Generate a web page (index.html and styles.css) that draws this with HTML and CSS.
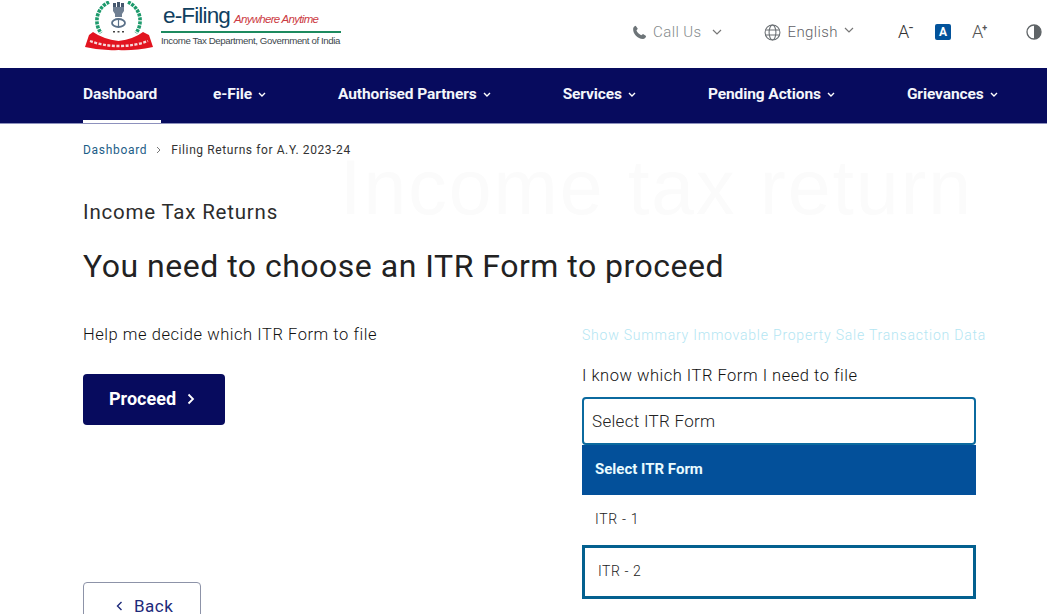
FILE: index.html
```html
<!DOCTYPE html>
<html lang="en">
<head>
<meta charset="utf-8">
<title>Income Tax Returns</title>
<link rel="stylesheet" href="styles.css">
</head>
<body>
<header class="topbar">
  <div class="brand">
    <svg class="emblem" width="72" height="52" viewBox="0 0 72 52" aria-hidden="true">
      <path d="M26 1A20.500 20.500 0 0 0 18 32M45 1A20.500 20.500 0 0 1 53 32" fill="none" stroke="#1d9a6c" stroke-width="3.600" stroke-dasharray="3 1"/>
      <path d="M30 6h11v4l-2 3v3h-7v-3l-2-3z" fill="#6f7f92"/>
      <path d="M30 2h3v4h-3zM34 1h3v5h-3zM38 2h3v4h-3z" fill="#46586e"/>
      <ellipse cx="35.500" cy="22" rx="6.500" ry="4" fill="none" stroke="#5a7088" stroke-width="1.800"/>
      <path d="M35.500 18v8" stroke="#5a7088" stroke-width="1.200"/>
      <path d="M30 30h2v1.500h-2zM34.500 30h2v1.500h-2zM39 30h2v1.500h-2z" fill="#444"/>
      <path d="M10 31Q20 38 35.500 40 51 38 60 31L66 34 70 46Q50 50 35.500 49 18 50 2 46L6 34Z" fill="#e2141f"/>
      <path d="M7 40Q20 45 35.500 45 52 45 65 40" fill="none" stroke="#f6d9da" stroke-width="2.400" stroke-dasharray="3 1.500"/>
    </svg>
    <div class="brand-text">
      <div class="brand-name"><span class="brand-title">e-Filing</span><span class="brand-tag">Anywhere Anytime</span></div>
      <div class="brand-dept">Income Tax Department, Government of India</div>
    </div>
  </div>
  <div class="tools">
    <div class="tool tool-call">
      <svg width="17" height="17" viewBox="0 0 24 24" aria-hidden="true"><path d="M6.600 2.500l3 4.200-1.900 2.600c1.300 2.900 3.700 5.300 6.700 6.600l2.600-1.800 4.300 2.900c-.3 2.300-2 4.200-4.400 4.200C9 21 3 14.500 3 7.200 3 4.800 4.400 3 6.600 2.500z" fill="#6d7478"/></svg>
      <span class="tool-label call-label">Call Us</span>
      <svg class="chev-light" width="10" height="6" viewBox="0 0 10 6" aria-hidden="true"><path d="M1 1l4 4 4-4" fill="none" stroke="#777" stroke-width="1.200"/></svg>
    </div>
    <div class="tool tool-lang">
      <svg width="17" height="17" viewBox="0 0 24 24" aria-hidden="true"><g fill="none" stroke="#6a6f73" stroke-width="1.500"><circle cx="12" cy="12" r="10.500"/><ellipse cx="12" cy="12" rx="4.800" ry="10.500"/><path d="M2 8.500h20M2 15.500h20"/></g></svg>
      <span class="tool-label">English</span>
      <svg class="chev-up" width="10" height="6" viewBox="0 0 10 6" aria-hidden="true"><path d="M1 1l4 4 4-4" fill="none" stroke="#777" stroke-width="1.200"/></svg>
    </div>
    <div class="font-tools">
      <span class="font-btn">A<sup class="font-mark">−</sup></span>
      <span class="font-btn font-active">A</span>
      <span class="font-btn font-light">A<sup class="font-mark">+</sup></span>
    </div>
    <svg class="contrast" width="16" height="16" viewBox="0 0 16 16" aria-hidden="true"><circle cx="8" cy="8" r="7" fill="#fff" stroke="#5f6467" stroke-width="1.300"/><path d="M8 1a7 7 0 0 1 0 14z" fill="#5f6467"/></svg>
  </div>
</header>

<nav class="nav">
  <a class="nav-item nav-active">Dashboard</a>
  <a class="nav-item">e-File<svg class="nav-chev" width="8" height="5" viewBox="0 0 8 5" aria-hidden="true"><path d="M1 1l3 3 3-3" fill="none" stroke="#fff" stroke-width="1.400"/></svg></a>
  <a class="nav-item">Authorised Partners<svg class="nav-chev" width="8" height="5" viewBox="0 0 8 5" aria-hidden="true"><path d="M1 1l3 3 3-3" fill="none" stroke="#fff" stroke-width="1.400"/></svg></a>
  <a class="nav-item">Services<svg class="nav-chev" width="8" height="5" viewBox="0 0 8 5" aria-hidden="true"><path d="M1 1l3 3 3-3" fill="none" stroke="#fff" stroke-width="1.400"/></svg></a>
  <a class="nav-item">Pending Actions<svg class="nav-chev" width="8" height="5" viewBox="0 0 8 5" aria-hidden="true"><path d="M1 1l3 3 3-3" fill="none" stroke="#fff" stroke-width="1.400"/></svg></a>
  <a class="nav-item">Grievances<svg class="nav-chev" width="8" height="5" viewBox="0 0 8 5" aria-hidden="true"><path d="M1 1l3 3 3-3" fill="none" stroke="#fff" stroke-width="1.400"/></svg></a>
</nav>

<main class="content">
  <div class="watermark">Income tax return</div>
  <div class="crumbs">
    <a class="crumb-link">Dashboard</a>
    <svg class="crumb-sep" width="6" height="8" viewBox="0 0 6 8" aria-hidden="true"><path d="M1 1l3 3-3 3" fill="none" stroke="#777" stroke-width="1"/></svg>
    <span class="crumb-current">Filing Returns for A.Y. 2023-24</span>
  </div>
  <p class="eyebrow">Income Tax Returns</p>
  <h1 class="headline">You need to choose an ITR Form to proceed</h1>
  <div class="columns">
    <section class="col-left">
      <p class="help">Help me decide which ITR Form to file</p>
      <button class="btn-proceed">Proceed<svg width="8" height="12" viewBox="0 0 8 12" aria-hidden="true"><path d="M1.500 1.500L6 6l-4.500 4.500" fill="none" stroke="#fff" stroke-width="1.800"/></svg></button>
      <button class="btn-back"><svg width="7" height="10" viewBox="0 0 7 10" aria-hidden="true"><path d="M5.500 1L1.500 5l4 4" fill="none" stroke="#1d2a7a" stroke-width="1.400"/></svg>Back</button>
    </section>
    <section class="col-right">
      <a class="summary-link">Show Summary Immovable Property Sale Transaction Data</a>
      <p class="know">I know which ITR Form I need to file</p>
      <div class="select-box">Select ITR Form</div>
      <ul class="options">
        <li class="option option-selected">Select ITR Form</li>
        <li class="option option-plain">ITR - 1</li>
        <li class="option option-focus">ITR - 2</li>
      </ul>
    </section>
  </div>
</main>
</body>
</html>
```
FILE: styles.css
```css
* { box-sizing: border-box; }
html, body { margin: 0; height: 614px; overflow: hidden; background: #fff; }
body { font-family: Roboto, "Liberation Sans", sans-serif; color: #222; }
p, h1, ul { margin: 0; padding: 0; }

.topbar { height: 68px; display: flex; justify-content: space-between; align-items: flex-start; padding-left: 83px; }
.brand { display: flex; align-items: flex-start; gap: 6px; }
.emblem { margin-top: 1px; }
.brand-text { width: 180px; font-family: "Liberation Sans", Arial, sans-serif; }
.brand-name { height: 33px; border-bottom: 2px solid #1d8a5f; display: flex; align-items: baseline; gap: 4px; padding-top: 3px; }
.brand-title { font-size: 22.500px; color: #10405f; letter-spacing: -.85px; margin-left: 2px; }
.brand-tag { font-size: 11.500px; font-style: italic; color: #cc3b43; letter-spacing: -.7px; }
.brand-dept { font-size: 9.700px; line-height: 13px; color: #3d474c; margin-top: 1px; white-space: nowrap; letter-spacing: -.4px; }

.tools { display: flex; align-items: center; height: 64px; color: #777; padding-right: 5px; }
.tool { display: flex; align-items: center; }
.tool-label { font-size: 15px; letter-spacing: .4px; font-weight: 300; color: #5f5f66; }
.tool-call { margin-right: 42px; gap: 5px; }
.call-label { color: #858a8c; }
.chev-light { margin-left: 5px; }
.tool-lang { margin-right: 44px; gap: 7px; }
.chev-up { margin: -5px 0 0 -1px; }
.font-tools { display: flex; align-items: center; gap: 21px; margin-right: 38px; }
.font-btn { width: 16px; height: 16px; font-size: 18px; font-weight: 300; line-height: 16px; color: #333; display: flex; }
.font-light { color: #555; }
.font-mark { font-size: 9px; line-height: 8px; margin: 0 0 0 -1px; font-weight: 700; }
.font-active { background: #03539b; color: #fff; border-radius: 2px; font-size: 12px; font-weight: 700; justify-content: center; }
.contrast { flex: none; }

.nav { height: 56px; background: #070b5e; border-bottom: 1px solid #8d91bd; padding-left: 83px; display: flex; }
.nav-item { flex: none; font-size: 15.500px; font-weight: 700; color: #f4f6fb; line-height: 52px; height: 55px; margin-right: 72px; white-space: nowrap; letter-spacing: -.1px; }
.nav-active { width: 78px; margin-right: 52px; border-bottom: 3px solid #fff; }
.nav-chev { margin-left: 6px; vertical-align: 2px; }

.content { position: relative; padding: 17px 0 0 83px; }
.watermark { position: absolute; left: 340px; top: 17px; font-family: "Liberation Sans", Arial, sans-serif; font-size: 77px; line-height: 92px; color: #fbfbfb; letter-spacing: 2px; white-space: nowrap; }
.crumbs { position: relative; display: flex; align-items: center; font-size: 12px; line-height: 18px; letter-spacing: .6px; }
.crumb-link { color: #1c5d87; letter-spacing: .7px; }
.crumb-sep { margin: 0 9px 0 9px; }
.crumb-current { color: #333; }
.eyebrow { position: relative; font-size: 20.500px; line-height: 28px; letter-spacing: .8px; margin-top: 39px; color: #2c2c2c; }
.headline { position: relative; font-size: 32px; line-height: 42px; font-weight: 400; letter-spacing: .5px; margin-top: 19px; color: #222; }

.columns { position: relative; display: flex; margin-top: 36px; }
.col-left { width: 499px; flex: none; }
.col-right { width: 394px; flex: none; }

.help { font-size: 16.500px; font-weight: 300; line-height: 24px; letter-spacing: .55px; color: #111; }
.btn-proceed { display: flex; align-items: center; gap: 11px; width: 142px; height: 51px; margin-top: 27px; padding: 0 0 2px 26px; background: #070b5e; color: #fff; border: 0; border-radius: 4px; font: 700 18px Roboto, sans-serif; }
.btn-back { display: flex; align-items: center; gap: 11px; width: 118px; height: 48px; margin-top: 157px; padding: 0 0 0 32px; background: #fff; color: #1d2a7a; border: 1px solid #8d93a8; border-radius: 4px; font: 400 17px Roboto, sans-serif; letter-spacing: .5px; }

.summary-link { display: block; font-size: 14px; font-weight: 300; line-height: 24px; letter-spacing: .78px; color: #b4e6f3; white-space: nowrap; }
.know { font-size: 16.500px; font-weight: 300; line-height: 24px; letter-spacing: .52px; color: #111; margin-top: 17px; }
.select-box { height: 48px; margin-top: 9px; border: 2px solid #0b6a9f; border-radius: 4px; padding-left: 8px; font-size: 17px; font-weight: 300; line-height: 44px; letter-spacing: .3px; color: #222; }
.options { list-style: none; }
.option { width: 394px; }
.option-selected { height: 50px; background: #03509a; color: #e9fbff; font-size: 15px; font-weight: 700; line-height: 48px; padding-left: 13px; }
.option-plain { height: 50px; font-size: 14px; font-weight: 300; line-height: 48px; padding-left: 13px; letter-spacing: .7px; color: #222; }
.option-focus { height: 54px; border: 3px solid #03608f; font-size: 14px; font-weight: 300; line-height: 46px; padding-left: 13px; letter-spacing: .55px; color: #222; }
```
